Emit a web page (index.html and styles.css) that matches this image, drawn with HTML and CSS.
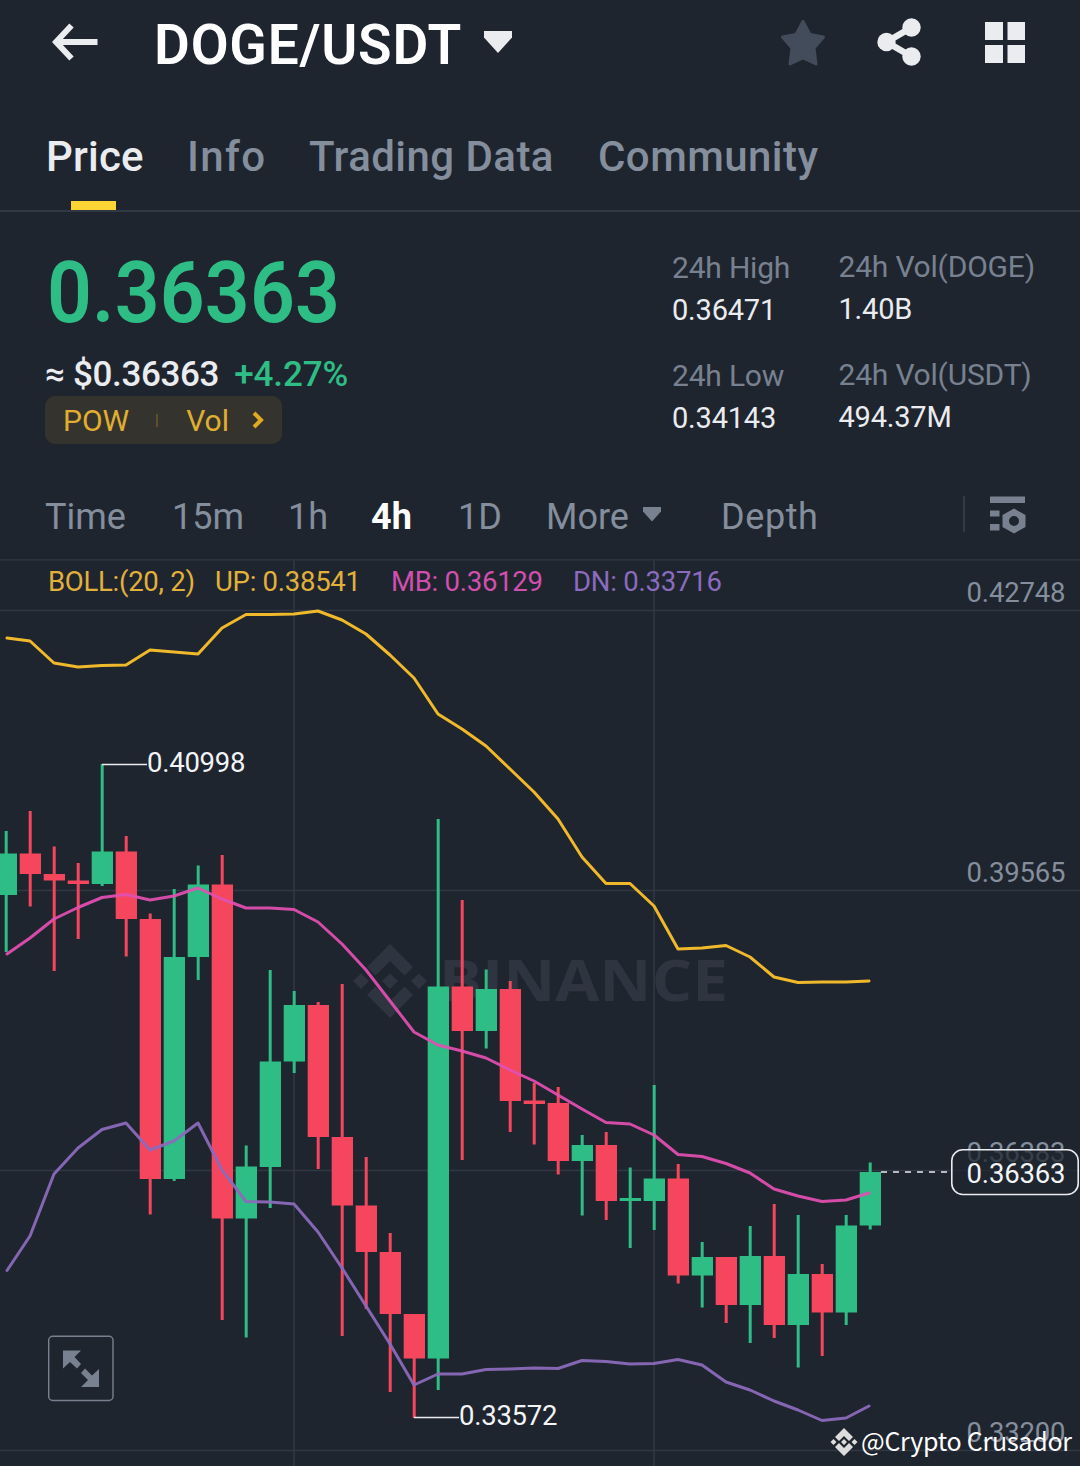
FILE: index.html
```html
<!DOCTYPE html>
<html lang="en">
<head>
<meta charset="utf-8">
<title>DOGE/USDT</title>
<link rel="stylesheet" href="styles.css">
</head>
<body>
<header class="topbar">
  <svg class="back" width="46" height="38" viewBox="0 0 46 38"><path d="M4.500 19H45.500M19.500 2.500L4 19L19.500 35.500" fill="none" stroke="#eaecef" stroke-width="6"/></svg>
  <h1 class="pair">DOGE/USDT</h1>
  <svg class="pair-caret" width="28" height="22" viewBox="0 0 28 22"><path d="M0 0H28V6.500L14 22L0 6.500Z" fill="#eaecef"/></svg>
  <svg class="star" width="46" height="48" viewBox="0 0 46 48"><path d="M23 2.500L30 15.500L43.500 18L34 29L36 45L23 39L10 45L12 29L2.500 18L16 15.500Z" fill="#434c5a" stroke="#434c5a" stroke-width="3" stroke-linejoin="round"/></svg>
  <svg class="share" width="44" height="48" viewBox="0 0 44 48"><g fill="#eaecef"><circle cx="9.500" cy="24" r="9.200"/><circle cx="34.500" cy="9.500" r="9.200"/><circle cx="34.500" cy="38.500" r="9.200"/></g><path d="M34.500 9.500L9.500 24L34.500 38.500" fill="none" stroke="#eaecef" stroke-width="6.500"/></svg>
  <svg class="apps" width="40" height="41" viewBox="0 0 40 41"><path d="M0 0H18V18H0ZM22.500 0H40V18H22.500ZM0 23H18V41H0ZM22.500 23H40V41H22.500Z" fill="#eaecef"/></svg>
</header>

<nav class="tabs">
  <a class="tab active">Price</a>
  <a class="tab info">Info</a>
  <a class="tab">Trading Data</a>
  <a class="tab">Community</a>
</nav>

<section class="summary">
  <div class="quote">
    <div class="last">0.36363</div>
    <div class="fiat"><span>≈ $0.36363</span><span class="change">+4.27%</span></div>
    <div class="tags">
      <span>POW</span><i class="tag-sep"></i><span>Vol</span>
      <svg class="chevron" width="12" height="18" viewBox="0 0 12 18"><path d="M2 2L9 9L2 16" fill="none" stroke="#e0aa24" stroke-width="4"/></svg>
    </div>
  </div>
  <div class="stats">
    <dl><dt>24h High</dt><dd>0.36471</dd><dt>24h Low</dt><dd>0.34143</dd></dl>
    <dl class="volumes"><dt>24h Vol(DOGE)</dt><dd>1.40B</dd><dt>24h Vol(USDT)</dt><dd>494.37M</dd></dl>
  </div>
</section>

<nav class="intervals">
  <a>Time</a><a>15m</a><a>1h</a><a class="active">4h</a><a>1D</a>
  <a class="more">More<svg width="18" height="15" viewBox="0 0 18 15"><path d="M0 0H18V4.500L9 14.500L0 4.500Z" fill="#78818f"/></svg></a>
  <a class="depth">Depth</a>
  <i class="divider"></i>
  <svg class="settings" width="36" height="38" viewBox="0 0 36 38"><g fill="#78818f"><path d="M0 .500H35V7H0ZM0 14.500H9.500V20.500H0ZM0 28H9.500V34.500H0Z"/><path fill-rule="evenodd" d="M24 12.500L35.500 19V31L24 37.500L12.500 31V19ZM24 20a5 5 0 1 0 0 10a5 5 0 1 0 0-10Z"/></g></svg>
</nav>

<svg class="chart" width="1080" height="907" viewBox="0 559 1080 907">
  <g stroke="#303844" stroke-width="1.500">
    <path d="M0 610.500H1080M0 890.500H1080M0 1170.500H1080M0 1450.500H1080M294 560V1466M654 560V1466"/>
    <path d="M0 559.750H1080" stroke="#2b323d" stroke-width="2"/>
  </g>
  <g fill="#2f3540">
    <path d="M390 944L413 967L404.500 975.500L390 961L375.500 975.500L367 967ZM390 1018L413 995L404.500 986.500L390 1001L375.500 986.500L367 995ZM390 973.500L398 981L390 989L382 981ZM361 973.500L369 981L361 989L353 981ZM419 973.500L427 981L419 989L411 981Z"/>
    <text x="439" y="1001" font-family="Open Sans, sans-serif" font-weight="700" font-size="58" textLength="289" lengthAdjust="spacingAndGlyphs">BINANCE</text>
  </g>
  <g id="candles"></g>
  <g fill="none" stroke-width="3" stroke-linejoin="round" stroke-linecap="round">
    <polyline stroke="#efb92b" points="7,638 30,641 54,663 78,667 102,665.5 126,665 150,650 174,652 198,654 222,628 246,614.5 270,614.5 294,614 318,611 342,620 366,634 390,655 414,678 438,714 462,729 486,746 510,769 534,792 558,819 582,857 606,883.5 630,883.5 654,906 678,949 702,948 726,945.5 750,957 774,977 798,982.5 822,982 846,982 869,981"/>
    <polyline stroke="#e250b2" stroke-opacity=".93" points="7,954 30,938 54,919 78,907.5 102,897.5 126,894.5 150,900 174,896 198,888 222,899 246,908 270,908 294,909.5 318,922 342,944 366,970 390,1001 414,1032 438,1045 462,1051 486,1058 510,1070 534,1081 558,1095 582,1109 606,1122.5 630,1124 654,1135 678,1154.5 702,1156.5 726,1163.5 750,1173 774,1189 798,1196 822,1201.5 846,1200 869,1193"/>
    <polyline stroke="#8b69bb" stroke-opacity=".95" points="7,1270.5 30,1236 54,1174 78,1148 102,1129.5 126,1123 150,1150 174,1141 198,1123 222,1170 246,1201.5 270,1202 294,1204 318,1232 342,1268 366,1306 390,1344 414,1385 438,1374 462,1374 486,1369.5 510,1369 534,1368 558,1368.5 582,1360.5 606,1361.5 630,1364 654,1363.5 678,1359.5 702,1365 726,1382 750,1390 774,1401 798,1410 822,1420.5 846,1418 869,1406"/>
  </g>
  <g class="legend">
    <text x="48" y="591" fill="#e2b13a" textLength="147">BOLL:(20, 2)</text>
    <text x="215" y="591" fill="#e2b13a" textLength="146">UP: 0.38541</text>
    <text x="391" y="591" fill="#d34fae" textLength="152">MB: 0.36129</text>
    <text x="573" y="591" fill="#8b6bbd" textLength="149">DN: 0.33716</text>
  </g>
  <g class="axis">
    <text x="966.500" y="602" textLength="99">0.42748</text>
    <text x="966.500" y="882" textLength="99">0.39565</text>
    <text x="966.500" y="1162" textLength="99">0.36383</text>
    <text x="966.500" y="1442" textLength="99">0.33200</text>
  </g>
  <g class="marks">
    <path d="M102 764.500H147M414 1417.500H459" stroke="#eaecef" stroke-width="1.500"/>
    <text x="147" y="771.500" textLength="98.500">0.40998</text>
    <text x="459" y="1425" textLength="98.500">0.33572</text>
    <path d="M881 1172H951" stroke="#eaecef" stroke-width="1.700" stroke-dasharray="6 6"/>
    <rect x="951.800" y="1149.800" width="126.400" height="44.700" rx="11" fill="#1f252f" fill-opacity=".75" stroke="#eaecef" stroke-width="1.600"/>
    <text x="966.500" y="1183" textLength="99">0.36363</text>
  </g>
  <g class="expand">
    <rect x="48.700" y="1336.200" width="64.300" height="64.300" rx="4" fill="none" stroke="#78818f" stroke-width="1.400"/>
    <path fill="#78818f" d="M63 1350.500H81L74.500 1357L81 1364L77 1368.500L70 1362L63 1368.500ZM99 1387H81L88 1380L81 1373L85 1368.500L92 1375.500L99 1369Z"/>
  </g>
  <g class="credit">
    <path fill="#dcdcdc" d="M844 1428L853 1437L849 1441L844 1436L839 1441L835 1437ZM844 1456L853 1447L849 1443L844 1448L839 1443L835 1447ZM844 1439L847 1442L844 1445L841 1442ZM833.500 1439L836.500 1442L833.500 1445L830.500 1442ZM854.500 1439L857.500 1442L854.500 1445L851.500 1442Z"/>
    <text x="861" y="1451" textLength="211">@Crypto Crusador</text>
  </g>
</svg>
<script src="candles.js"></script>
</body>
</html>
```
FILE: styles.css
```css
* { box-sizing: border-box; }
body {
  margin: 0;
  width: 1080px;
  height: 1466px;
  overflow: hidden;
  background: #1f252f;
  color: #eaecef;
  font-family: Roboto, "Liberation Sans", sans-serif;
}
svg { display: block; flex: none; }

.topbar { display: flex; align-items: center; height: 84px; padding-left: 52px; }
.pair {
  margin: 0 0 0 56px;
  padding-top: 6px;
  width: 324px;
  font-size: 55px;
  line-height: 64px;
  font-weight: 600;
  letter-spacing: .8px;
  white-space: nowrap;
  color: #fff;
}
.pair-caret { margin-left: 6px; }
.star { margin: 2px 0 0 268px; }
.share { margin-left: 51px; }
.apps { margin-left: 64px; }

.tabs {
  display: grid;
  grid-template-columns: 141px 122px 289px auto;
  height: 128px;
  padding: 43px 0 0 46px;
  border-bottom: 2px solid #303844;
  font-size: 42px;
  line-height: 60px;
  font-weight: 500;
  letter-spacing: .45px;
  color: #848e9c;
}
.tab { white-space: nowrap; }
.info { letter-spacing: 1.4px; }
.tab.active { color: #eaecef; letter-spacing: .2px; }
.tab.active::after {
  content: "";
  display: block;
  width: 45px;
  height: 9px;
  margin: 14px 0 0 25px;
  background: #fcd535;
}

.summary { display: flex; justify-content: space-between; height: 262px; }
.quote { padding: 32px 0 0 45px; }
.last {
  margin-left: 2px;
  font-size: 85px;
  line-height: 98px;
  font-weight: 600;
  letter-spacing: .2px;
  color: #2ebd85;
  transform: scaleX(.925);
  transform-origin: 0 50%;
}
.fiat { display: flex; gap: 15px; font-size: 35px; line-height: 42px; font-weight: 500; letter-spacing: -.35px; margin-top: 12px; }
.change { color: #2ebd85; letter-spacing: -.1px; }
.tags {
  display: flex;
  align-items: center;
  width: 237px;
  height: 48px;
  padding: 1px 0 0 18px;
  border-radius: 10px;
  background: #35332d;
  color: #e0ae30;
  font-size: 30px;
}
.tag-sep { width: 2px; height: 13px; margin: 0 28px 0 27px; background: #5d4f2d; }
.chevron { margin: -2px 0 0 23px; }

.stats { display: flex; width: 408px; font-size: 30px; letter-spacing: -.2px; }
dl { margin: 0; width: 166.5px; padding-top: 35px; white-space: nowrap; }
.volumes { width: auto; padding-top: 34px; }
dt { line-height: 42px; color: #78818f; }
dd { margin: 0 0 24px; line-height: 42px; font-size: 29px; }

.intervals {
  display: grid;
  grid-template-columns: 127px 116px 83px 87px 88px 175px 242px 27px 36px;
  align-items: center;
  height: 85px;
  padding: 0 0 0 45px;
  font-size: 36px;
  line-height: 84px;
  color: #848e9c;
}
.intervals .active { color: #fff; font-weight: 700; }
.more { display: flex; gap: 14px; }
.more svg { margin-top: 32px; }
.depth { letter-spacing: .6px; }
.divider { width: 2px; height: 36px; margin-bottom: 5px; background: #333b47; }
.settings { margin-bottom: 4px; }

.chart { font-size: 27.5px; }
.axis { fill: #848e9c; }
.marks text { fill: #f2f4f6; }
.credit text { fill: #fff; font-family: "Noto Sans CJK SC", sans-serif; font-size: 25px; font-weight: 400; }
```
FILE: candles.js
```
// direction, high, body top, body bottom, low; one candle every 24px
const candles = [
  ["u",831,853.5,895,952],["d",811,853.5,874,906.5],["d",846.5,874,880.5,971],["d",863,880.5,884,939],
  ["u",764,851.5,884,886],["d",836,851.5,919,956.5],["d",913.5,919,1179,1214.5],["u",889,957,1179,1181],
  ["u",865.5,884.5,957,980],["d",855,884.5,1218.5,1320],["u",1145.5,1166.5,1218.5,1337.5],["u",970,1061.5,1167,1208],
  ["u",991,1005,1061.5,1073],["d",1002,1005,1137,1169],["d",984,1137,1205.5,1336],["d",1157,1205.5,1252,1309],
  ["d",1233,1252,1314,1392],["d",1314,1314,1358.5,1418],["u",819,986.5,1358.5,1390],["d",900,986.5,1031,1160],
  ["u",969.5,989,1031,1048.5],["d",981,989,1101,1132],["d",1083,1100.5,1104,1144.5],["d",1087,1103,1161,1174.5],
  ["u",1135,1145,1161,1215.5],["d",1132,1145,1201,1220],["u",1167.5,1198,1201,1248],["u",1085,1178.5,1201,1230],
  ["d",1164,1178.5,1275.5,1283.5],["u",1242,1257,1275.5,1307.5],["d",1257,1257,1305,1323],["u",1226,1256,1305,1343],
  ["d",1204,1256,1325,1338],["u",1215,1274,1325,1367.5],["d",1264,1274,1312.5,1356],["u",1215,1225.5,1312.5,1325],
  ["u",1162.5,1172,1225.5,1229.5]
];
const layer = document.getElementById("candles");
const rect = (x, y, w, h, fill) => {
  const r = document.createElementNS("http://www.w3.org/2000/svg", "rect");
  for (const [k, v] of Object.entries({ x, y, width: w, height: h, fill })) r.setAttribute(k, v);
  layer.append(r);
};
candles.forEach(([dir, high, top, bottom, low], i) => {
  const x = 6 + 24 * i;
  const color = dir === "u" ? "#2ebd85" : "#f6465d";
  rect(x - 1.3, high, 3, low - high, color);
  rect(x - 10.3, top, 21.3, bottom - top, color);
});
```
